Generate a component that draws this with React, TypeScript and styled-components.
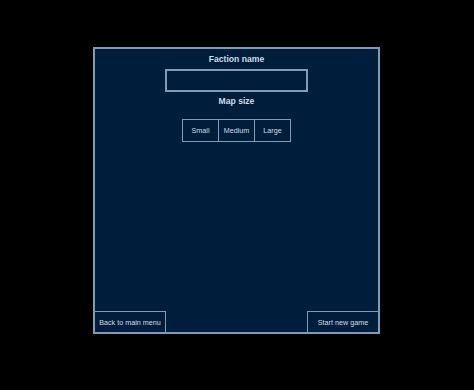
import React from "react";
import styled, { createGlobalStyle } from "styled-components";

const Global = createGlobalStyle`
  html, body { margin: 0; padding: 0; background: #000; }
  body { font-family: "Liberation Sans", Arial, sans-serif; }
`;

const Screen = styled.div`
  width: 474px;
  height: 390px;
  display: flex;
  justify-content: center;
  align-items: flex-start;
  padding: 47px 1px 0 0;
  box-sizing: border-box;
`;

const Panel = styled.div`
  width: 287px;
  height: 287px;
  box-sizing: border-box;
  background: #001e3c;
  border: 2px solid #7c9db6;
  display: flex;
  flex-direction: column;
  justify-content: space-between;
`;

const Top = styled.div`
  display: flex;
  flex-direction: column;
  align-items: center;
  padding-top: 5px;
`;

const Heading = styled.div`
  color: #c9dcec;
  font-weight: bold;
  font-size: 8.6px;
  line-height: 11px;
`;

const NameInput = styled.input`
  width: 143px;
  height: 23px;
  box-sizing: border-box;
  margin: 4px 0 4px;
  background: transparent;
  border: 2px solid #7c9db6;
  outline: none;
  color: #c9dcec;
  font-family: inherit;
  font-size: 9px;
`;

const Group = styled.div`
  display: flex;
  margin-top: 12px;
`;

const Btn = styled.button<{ $w?: number }>`
  width: ${(p) => p.$w ?? 36}px;
  height: 23px;
  box-sizing: border-box;
  padding: 0;
  background: transparent;
  border: 1px solid #7c9db6;
  color: #d2dde8;
  font-family: "Liberation Sans", Arial, sans-serif;
  font-size: 7.2px;
  cursor: pointer;
  & + & { margin-left: -1px; }
`;

const Bottom = styled.div`
  display: flex;
  justify-content: space-between;
  margin: 0 -1px -1px;
`;

const NavBtn = styled(Btn)`
  height: 22px;
`;

export default function App() {
  return (
    <>
      <Global />
      <Screen>
        <Panel>
          <Top>
            <Heading>Faction name</Heading>
            <NameInput type="text" />
            <Heading>Map size</Heading>
            <Group>
              <Btn $w={37}>Small</Btn>
              <Btn $w={37}>Medium</Btn>
              <Btn $w={37}>Large</Btn>
            </Group>
          </Top>
          <Bottom>
            <NavBtn $w={72}>Back to main menu</NavBtn>
            <NavBtn $w={72}>Start new game</NavBtn>
          </Bottom>
        </Panel>
      </Screen>
    </>
  );
}
